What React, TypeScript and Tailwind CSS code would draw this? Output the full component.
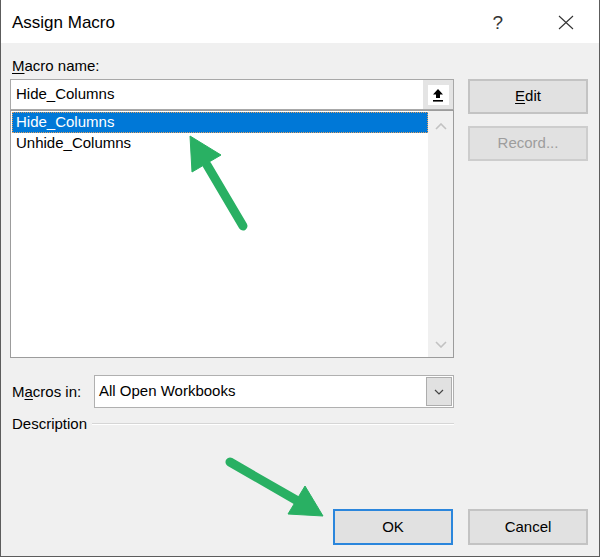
import { type ReactNode } from 'react'

function DialogButton({ children, primary, disabled, tall }: { children: ReactNode; primary?: boolean; disabled?: boolean; tall?: boolean }) {
  const border = primary ? 'border-[#2b86dc]' : disabled ? 'border-[#cdcdcd]' : 'border-[#c3c3c3]'
  return (
    <button
      className={`flex w-[120px] items-center justify-center border-2 bg-[#e1e1e1] text-[15px] ${tall ? 'h-[36px]' : 'h-[35px]'} ${border} ${disabled ? 'text-[#9d9d9d]' : 'text-black'}`}
    >
      {children}
    </button>
  )
}

function Chevron({ down, className }: { down?: boolean; className?: string }) {
  return (
    <svg width="12" height="7" viewBox="0 0 12 7" className={className}>
      <path d={down ? 'M1 1 L6 6 L11 1' : 'M1 6 L6 1 L11 6'} fill="none" stroke="currentColor" strokeWidth="1.6" />
    </svg>
  )
}

function Arrows() {
  return (
    <svg className="pointer-events-none absolute inset-0" width="600" height="557" viewBox="0 0 600 557">
      <g fill="#29b063" stroke="#29b063">
        <line x1="243" y1="226" x2="207" y2="165" strokeWidth="9" strokeLinecap="round" />
        <polygon points="190,136 221,155 192,172" strokeWidth="1" strokeLinejoin="round" />
        <line x1="230" y1="462" x2="296" y2="500" strokeWidth="9" strokeLinecap="round" />
        <polygon points="323,516 288,514 305,486" strokeWidth="1" strokeLinejoin="round" />
      </g>
    </svg>
  )
}

export default function App() {
  return (
    <div className="relative h-[557px] w-[600px] overflow-hidden bg-white text-black" style={{ fontFamily: '"Liberation Sans", Arial, sans-serif' }}>
      <div className="flex h-[557px] flex-col border-x border-b border-[#5c5c5c] bg-[#f0f0f0]">
        {/* Title bar */}
        <div className="flex h-[43px] shrink-0 items-center justify-between bg-white pl-[11px] pr-[25px] pt-[2px]">
          <span className="text-[17px] leading-[20px]">Assign Macro</span>
          <div className="flex items-center">
            <span className="text-[19px] leading-[20px] text-[#333]">?</span>
            <svg width="16" height="15" viewBox="0 0 16 15" className="ml-[55px] text-[#333]">
              <path d="M1 1 L15 14 M15 1 L1 14" stroke="currentColor" strokeWidth="1.1" fill="none" />
            </svg>
          </div>
        </div>

        {/* Body */}
        <div className="flex flex-1 flex-col pl-[9px] pr-[11px] pt-[13px]">
          <div className="flex items-start gap-[14px]">
            {/* Left column */}
            <div className="flex w-[444px] flex-col">
              <div className="h-[20px] pl-[2px] text-[15px] leading-[20px]">
                <span className="underline underline-offset-2">M</span>acro name:
              </div>
              <div className="mt-[3px] flex h-[31px] border border-[#a8a8a8] bg-white">
                <div className="flex flex-1 items-center pl-[5px] text-[15px]">Hide_Columns</div>
                <div className="flex w-[30px] items-center justify-center bg-[#e4e4e4]">
                  <div className="flex h-[20px] w-[21px] items-center justify-center bg-white">
                    <svg width="12" height="14" viewBox="0 0 12 14">
                      <path d="M6 1 L11 6.5 L8 6.5 L8 10 L4 10 L4 6.5 L1 6.5 Z" fill="#000" />
                      <rect x="1" y="12" width="10" height="1.6" fill="#000" />
                    </svg>
                  </div>
                </div>
              </div>
              <div className="flex h-[248px] border border-[#9c9c9c] bg-white">
                <div className="flex flex-1 flex-col pl-[1px] pt-[1px] text-[15px]">
                  <div className="flex h-[21px] items-center border border-dotted border-[#e0a060] bg-[#0078d7] pl-[3px] text-white">
                    Hide_Columns
                  </div>
                  <div className="flex h-[20px] items-center pl-[4px]">Unhide_Columns</div>
                </div>
                <div className="flex w-[25px] flex-col items-center justify-between bg-[#f0f0f0] pb-[9px] pt-[12px] text-[#c2c2c2]">
                  <Chevron />
                  <Chevron down />
                </div>
              </div>

              <div className="mt-[17px] flex items-center">
                <div className="w-[84px] pl-[2px] text-[15px] leading-[20px]">
                  M<span className="underline underline-offset-2">a</span>cros in:
                </div>
                <div className="flex h-[33px] flex-1 border border-[#b0b0b0] bg-white p-[1px]">
                  <div className="flex flex-1 items-center pl-[3px] text-[15px]">All Open Workbooks</div>
                  <div className="flex w-[26px] items-center justify-center border border-[#adadad] bg-[#e1e1e1] text-[#444]">
                    <svg width="10" height="6" viewBox="0 0 10 6">
                      <path d="M1 1 L5 5 L9 1" fill="none" stroke="currentColor" strokeWidth="1.2" />
                    </svg>
                  </div>
                </div>
              </div>

              <div className="mt-[6px] flex items-center">
                <span className="pl-[2px] text-[15px] leading-[20px]">Description</span>
                <div className="ml-[5px] flex-1 border-b border-t border-b-white border-t-[#d6d6d6]" />
              </div>
            </div>

            {/* Right column */}
            <div className="mt-[23px] flex w-[120px] flex-col gap-[12px]">
              <DialogButton>
                <span className="underline underline-offset-2">E</span>dit
              </DialogButton>
              <DialogButton disabled>Record...</DialogButton>
            </div>
          </div>

          <div className="mt-[75px] flex justify-end gap-[15px]">
            <DialogButton primary tall>OK</DialogButton>
            <DialogButton tall>Cancel</DialogButton>
          </div>
        </div>
      </div>
      <Arrows />
    </div>
  )
}
